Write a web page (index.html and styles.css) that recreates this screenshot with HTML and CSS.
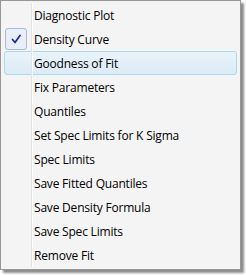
FILE: index.html
```html
<!DOCTYPE html>
<html lang="en">
<head>
  <meta charset="UTF-8" />
  <title>Fit Menu</title>
  <link rel="stylesheet" href="styles.css">
</head>
<body>
  <div class="backdrop">
    <div class="menu">
      <div class="item"><span class="gutter"></span><span class="label">Diagnostic Plot</span></div>
      <div class="item">
        <span class="gutter">
          <span class="check">
            <svg width="20" height="20" viewBox="0 0 20 20"><path d="M6.5 10.5 L9 13.5 L14 6.5" fill="none" stroke="#1c2b8f" stroke-width="1.7" stroke-linecap="round" stroke-linejoin="round"/></svg>
          </span>
        </span>
        <span class="label">Density Curve</span>
      </div>
      <div class="item hot"><span class="gutter"></span><span class="label">Goodness of Fit</span></div>
      <div class="item"><span class="gutter"></span><span class="label">Fix Parameters</span></div>
      <div class="item"><span class="gutter"></span><span class="label">Quantiles</span></div>
      <div class="item"><span class="gutter"></span><span class="label">Set Spec Limits for K Sigma</span></div>
      <div class="item"><span class="gutter"></span><span class="label">Spec Limits</span></div>
      <div class="item"><span class="gutter"></span><span class="label">Save Fitted Quantiles</span></div>
      <div class="item"><span class="gutter"></span><span class="label">Save Density Formula</span></div>
      <div class="item"><span class="gutter"></span><span class="label">Save Spec Limits</span></div>
      <div class="item"><span class="gutter"></span><span class="label">Remove Fit</span></div>
    </div>
  </div>
</body>
</html>
```

FILE: styles.css
```css
body {
  margin: 0;
  padding: 0;
  background: #ffffff;
  font-family: 'Open Sans', 'Noto Sans', sans-serif;
}

.backdrop {
  width: 246px;
  height: 275px;
  overflow: hidden;
}

.menu {
  position: relative;
  width: 239px;
  padding: 2px 0;
  background: #f4f4f4;
  border: 1px solid #979797;
  box-shadow: 3px 3px 2px rgba(0, 0, 0, 0.45);
}

/* vertical gutter line */
.menu::before {
  content: "";
  position: absolute;
  top: 2px;
  bottom: 2px;
  left: 30px;
  width: 1px;
  background: #e2e3e3;
  border-right: 1px solid #ffffff;
}

.item {
  display: flex;
  align-items: center;
  height: 24px;
  margin: 0 3px;
  box-sizing: border-box;
  border: 1px solid transparent;
  border-radius: 3px;
}

.item.hot {
  background: linear-gradient(to bottom, #eaf3fa, #dcebf6);
  border-color: #a9d9ee;
}

.gutter {
  width: 28px;
  height: 22px;
  display: flex;
  align-items: center;
  flex-shrink: 0;
}

.check {
  width: 22px;
  height: 22px;
  box-sizing: border-box;
  border: 1px solid #aebbcc;
  border-radius: 3px;
  background: #e8eefa;
  display: flex;
}

.label {
  padding-left: 1px;
  font-size: 12px;
  letter-spacing: -0.2px;
  color: #000000;
  white-space: nowrap;
}
```
